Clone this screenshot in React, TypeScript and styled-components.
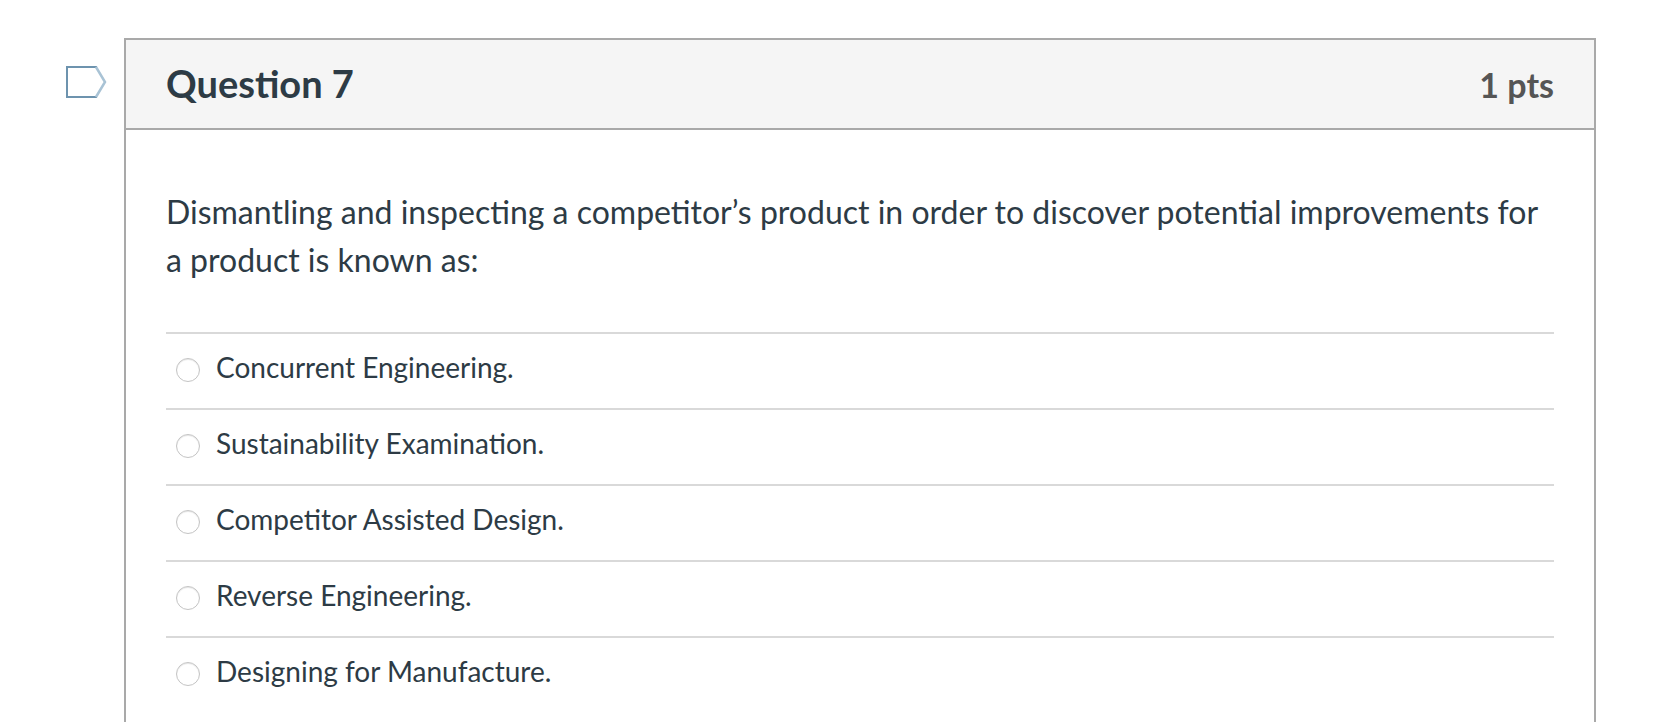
import React from 'react';
import styled, { createGlobalStyle } from 'styled-components';

const Global = createGlobalStyle`
  html, body { margin: 0; padding: 0; background: #fff; height: 722px; overflow: hidden; }
  body { font-family: Lato, "Liberation Sans", sans-serif; color: #2d3b45; }
`;
const Page = styled.div`
  display: flex;
  align-items: flex-start;
  padding: 38px 72px 0 66px;
  height: 722px;
  box-sizing: border-box;
  overflow: hidden;
`;
const Flag = styled.svg`
  width: 41px;
  height: 34px;
  margin-top: 27px;
  margin-right: 17px;
  flex: none;
`;
const Card = styled.section`
  flex: 1;
  border: 2px solid #a9a9a9;
  border-bottom: none;
  min-height: 700px;
`;
const Header = styled.header`
  display: flex;
  justify-content: space-between;
  align-items: center;
  height: 90px;
  box-sizing: border-box;
  padding: 0 40px;
  background: #f5f5f5;
  border-bottom: 2px solid #a9a9a9;
`;
const Title = styled.h2`
  margin: 0 0 2px;
  font-size: 38px;
  font-weight: 700;
  color: #2d3b45;
`;
const Points = styled.span`
  font-size: 34px;
  font-weight: 700;
  color: #555555;
`;
const Body = styled.div`
  padding: 58px 40px 0;
`;
const Prompt = styled.p`
  margin: 0 0 48px;
  font-size: 32px;
  line-height: 48px;
`;
const Answer = styled.label`
  display: flex;
  align-items: center;
  height: 76px;
  border-top: 2px solid #d9d9d9;
  box-sizing: border-box;
  padding-bottom: 8px;
  font-size: 28px;
`;
const Radio = styled.span`
  width: 24px;
  height: 24px;
  border: 1px solid #c4c4c4;
  border-radius: 50%;
  margin: 6px 16px 0 10px;
  box-sizing: border-box;
  background: #fff;
  box-shadow: inset 0 1px 1px rgba(0, 0, 0, 0.1);
  flex: none;
`;
const answers = ['Concurrent Engineering.', 'Sustainability Examination.', 'Competitor Assisted Design.', 'Reverse Engineering.', 'Designing for Manufacture.'];
export default function App() {
  return (
    <>
      <Global />
      <Page>
        <Flag viewBox="0 0 41 34">
          <path d="M31 2H1V32H31" fill="none" stroke="#6d93ae" strokeWidth="2" />
          <path d="M30 2L39 17L30 32" fill="none" stroke="#a9c3d5" strokeWidth="2.5" />
        </Flag>
        <Card>
          <Header>
            <Title>Question 7</Title>
            <Points>1 pts</Points>
          </Header>
          <Body>
            <Prompt>Dismantling and inspecting a competitor’s product in order to discover potential improvements for a product is known as:</Prompt>
            {answers.map((a) => (
              <Answer key={a}><Radio />{a}</Answer>
            ))}
          </Body>
        </Card>
      </Page>
    </>
  );
}
